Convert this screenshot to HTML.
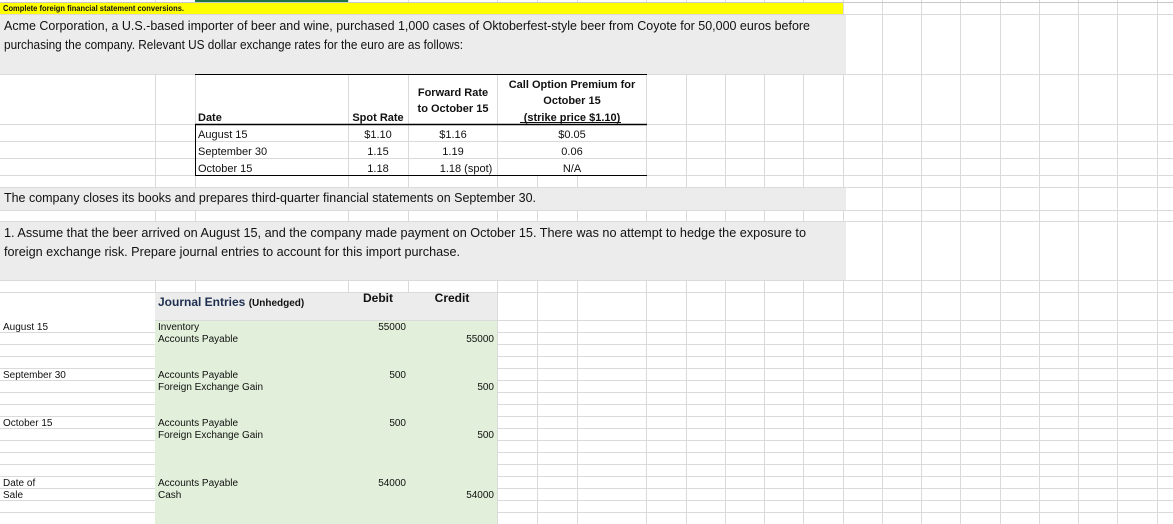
<!DOCTYPE html>
<html><head><meta charset="utf-8"><style>
html,body{margin:0;padding:0;background:#fff;width:1173px;height:524px;overflow:hidden}
svg{display:block}
.c{font-family:"Liberation Sans",sans-serif;font-size:13px;fill:#111}
.s{font-family:"Liberation Sans",sans-serif;font-size:11px;fill:#111}
.b{font-weight:bold}
</style></head><body>
<svg width="1173" height="524" xmlns="http://www.w3.org/2000/svg">
<g stroke="#dadada" stroke-width="1">
<line x1="155.5" y1="0" x2="155.5" y2="524"/><line x1="195.5" y1="0" x2="195.5" y2="524"/>
<line x1="348.5" y1="0" x2="348.5" y2="524"/><line x1="408.5" y1="0" x2="408.5" y2="524"/>
<line x1="497.5" y1="0" x2="497.5" y2="524"/><line x1="537.5" y1="0" x2="537.5" y2="524"/>
<line x1="577.5" y1="0" x2="577.5" y2="524"/><line x1="646.5" y1="0" x2="646.5" y2="524"/>
<line x1="686.5" y1="0" x2="686.5" y2="524"/><line x1="725.5" y1="0" x2="725.5" y2="524"/>
<line x1="764.5" y1="0" x2="764.5" y2="524"/><line x1="803.5" y1="0" x2="803.5" y2="524"/>
<line x1="843.5" y1="0" x2="843.5" y2="524"/><line x1="882.5" y1="0" x2="882.5" y2="524"/>
<line x1="921.5" y1="0" x2="921.5" y2="524"/><line x1="960.5" y1="0" x2="960.5" y2="524"/>
<line x1="1000.5" y1="0" x2="1000.5" y2="524"/><line x1="1039.5" y1="0" x2="1039.5" y2="524"/>
<line x1="1078.5" y1="0" x2="1078.5" y2="524"/><line x1="1117.5" y1="0" x2="1117.5" y2="524"/>
<line x1="1157.5" y1="0" x2="1157.5" y2="524"/>
<line x1="0" y1="2.5" x2="1173" y2="2.5" stroke="#c8c8c8"/>
<line x1="0" y1="14.5" x2="1173" y2="14.5"/><line x1="0" y1="74.5" x2="1173" y2="74.5"/>
<line x1="0" y1="124.5" x2="1173" y2="124.5"/><line x1="0" y1="141.5" x2="1173" y2="141.5"/>
<line x1="0" y1="158.5" x2="1173" y2="158.5"/><line x1="0" y1="175.5" x2="1173" y2="175.5"/>
<line x1="0" y1="187.5" x2="1173" y2="187.5"/><line x1="0" y1="210.5" x2="1173" y2="210.5"/>
<line x1="0" y1="221.5" x2="1173" y2="221.5"/><line x1="0" y1="280.5" x2="1173" y2="280.5"/>
<line x1="0" y1="292.5" x2="1173" y2="292.5"/><line x1="0" y1="320.5" x2="1173" y2="320.5"/>
<line x1="0" y1="332.5" x2="1173" y2="332.5"/><line x1="0" y1="344.5" x2="1173" y2="344.5"/>
<line x1="0" y1="356.5" x2="1173" y2="356.5"/><line x1="0" y1="368.5" x2="1173" y2="368.5"/>
<line x1="0" y1="380.5" x2="1173" y2="380.5"/><line x1="0" y1="392.5" x2="1173" y2="392.5"/>
<line x1="0" y1="404.5" x2="1173" y2="404.5"/><line x1="0" y1="416.5" x2="1173" y2="416.5"/>
<line x1="0" y1="428.5" x2="1173" y2="428.5"/><line x1="0" y1="440.5" x2="1173" y2="440.5"/>
<line x1="0" y1="452.5" x2="1173" y2="452.5"/><line x1="0" y1="464.5" x2="1173" y2="464.5"/>
<line x1="0" y1="476.5" x2="1173" y2="476.5"/><line x1="0" y1="488.5" x2="1173" y2="488.5"/>
<line x1="0" y1="500.5" x2="1173" y2="500.5"/><line x1="0" y1="512.5" x2="1173" y2="512.5"/>
</g>
<rect x="0" y="75" width="155" height="100" fill="#fff"/>
<rect x="196" y="75" width="450" height="100" fill="#fff"/>
<g stroke="#dadada"><line x1="0" y1="124.5" x2="155" y2="124.5"/><line x1="0" y1="141.5" x2="155" y2="141.5"/><line x1="0" y1="158.5" x2="155" y2="158.5"/><line x1="0" y1="175.5" x2="155" y2="175.5"/>
<line x1="196" y1="141.5" x2="646" y2="141.5"/><line x1="196" y1="158.5" x2="646" y2="158.5"/>
<line x1="348.5" y1="75" x2="348.5" y2="175"/><line x1="408.5" y1="75" x2="408.5" y2="175"/><line x1="497.5" y1="75" x2="497.5" y2="175"/></g>
<rect x="0" y="320" width="155" height="204" fill="#fff"/>
<g stroke="#dadada"><line x1="0" y1="332.5" x2="155" y2="332.5"/><line x1="0" y1="344.5" x2="155" y2="344.5"/><line x1="0" y1="356.5" x2="155" y2="356.5"/><line x1="0" y1="368.5" x2="155" y2="368.5"/><line x1="0" y1="380.5" x2="155" y2="380.5"/><line x1="0" y1="392.5" x2="155" y2="392.5"/><line x1="0" y1="404.5" x2="155" y2="404.5"/><line x1="0" y1="416.5" x2="155" y2="416.5"/><line x1="0" y1="428.5" x2="155" y2="428.5"/><line x1="0" y1="440.5" x2="155" y2="440.5"/><line x1="0" y1="452.5" x2="155" y2="452.5"/><line x1="0" y1="464.5" x2="155" y2="464.5"/><line x1="0" y1="476.5" x2="155" y2="476.5"/><line x1="0" y1="488.5" x2="155" y2="488.5"/><line x1="0" y1="500.5" x2="155" y2="500.5"/><line x1="0" y1="512.5" x2="155" y2="512.5"/></g>
<rect x="0" y="3" width="843" height="11" fill="#ffff00"/>
<rect x="195" y="0" width="153" height="2" fill="#217346"/>
<rect x="0" y="15" width="846" height="59" fill="#ececec"/>
<rect x="0" y="188" width="846" height="22" fill="#ececec"/>
<rect x="0" y="222" width="846" height="58" fill="#ececec"/>
<rect x="155" y="293" width="342" height="27" fill="#ececec"/>
<rect x="155" y="321" width="342" height="203" fill="#e2efda"/>
<g stroke="#000"><line x1="195" y1="74.5" x2="647" y2="74.5"/><line x1="195" y1="124.5" x2="647" y2="124.5" stroke-width="1.5"/><line x1="195" y1="175.5" x2="647" y2="175.5"/><line x1="195.5" y1="124" x2="195.5" y2="176"/></g>
<text x="3" y="11" class="c b" style="font-size:8px" textLength="181" lengthAdjust="spacingAndGlyphs">Complete foreign financial statement conversions.</text>
<text x="4" y="30" class="c" textLength="806" lengthAdjust="spacingAndGlyphs">Acme Corporation, a U.S.-based importer of beer and wine, purchased 1,000 cases of Oktoberfest-style beer from Coyote for 50,000 euros before</text>
<text x="4" y="49" class="c" textLength="459" lengthAdjust="spacingAndGlyphs">purchasing the company. Relevant US dollar exchange rates for the euro are as follows:</text>
<g class="c" style="font-size:11px">
<text x="198" y="121" class="b">Date</text>
<text x="198" y="138">August 15</text><text x="198" y="155">September 30</text><text x="198" y="172">October 15</text>
<g text-anchor="middle">
<text x="378" y="121" class="b">Spot Rate</text>
<text x="378" y="138">$1.10</text><text x="378" y="155">1.15</text><text x="378" y="172">1.18</text>
<text x="453" y="96" class="b">Forward Rate</text><text x="453" y="112" class="b">to October 15</text>
<text x="453" y="138">$1.16</text><text x="453" y="155">1.19</text><text x="466" y="172">1.18 (spot)</text>
<text x="572" y="88" class="b">Call Option Premium for</text><text x="572" y="104" class="b">October 15</text>
<text x="572" y="121" class="b">(strike price $1.10)</text>
<text x="572" y="138">$0.05</text><text x="572" y="155">0.06</text><text x="572" y="172">N/A</text>
</g></g>
<line x1="520" y1="122.5" x2="621" y2="122.5" stroke="#111"/>
<text x="4" y="202" class="c" textLength="532" lengthAdjust="spacingAndGlyphs">The company closes its books and prepares third-quarter financial statements on September 30.</text>
<text x="4" y="237" class="c" textLength="802" lengthAdjust="spacingAndGlyphs">1. Assume that the beer arrived on August 15, and the company made payment on October 15. There was no attempt to hedge the exposure to</text>
<text x="4" y="256" class="c" textLength="456" lengthAdjust="spacingAndGlyphs">foreign exchange risk. Prepare journal entries to account for this import purchase.</text>
<text x="158" y="306" class="c b" style="font-size:12px;fill:#1f2f50">Journal Entries <tspan style="font-size:10px;fill:#111">(Unhedged)</tspan></text>
<text x="378" y="302" class="c b" style="font-size:12px" text-anchor="middle">Debit</text>
<text x="452" y="302" class="c b" style="font-size:12px" text-anchor="middle">Credit</text>
<g class="s" style="font-size:10px">
<text x="3" y="330">August 15</text><text x="3" y="378">September 30</text><text x="3" y="426">October 15</text><text x="3" y="486">Date of</text><text x="3" y="498">Sale</text>
<text x="158" y="330">Inventory</text><text x="158" y="342">Accounts Payable</text>
<text x="158" y="378">Accounts Payable</text><text x="158" y="390">Foreign Exchange Gain</text>
<text x="158" y="426">Accounts Payable</text><text x="158" y="438">Foreign Exchange Gain</text>
<text x="158" y="486">Accounts Payable</text><text x="158" y="498">Cash</text>
<g text-anchor="end">
<text x="406" y="330">55000</text><text x="494" y="342">55000</text>
<text x="406" y="378">500</text><text x="494" y="390">500</text>
<text x="406" y="426">500</text><text x="494" y="438">500</text>
<text x="406" y="486">54000</text><text x="494" y="498">54000</text>
</g></g>
</svg>
</body></html>
